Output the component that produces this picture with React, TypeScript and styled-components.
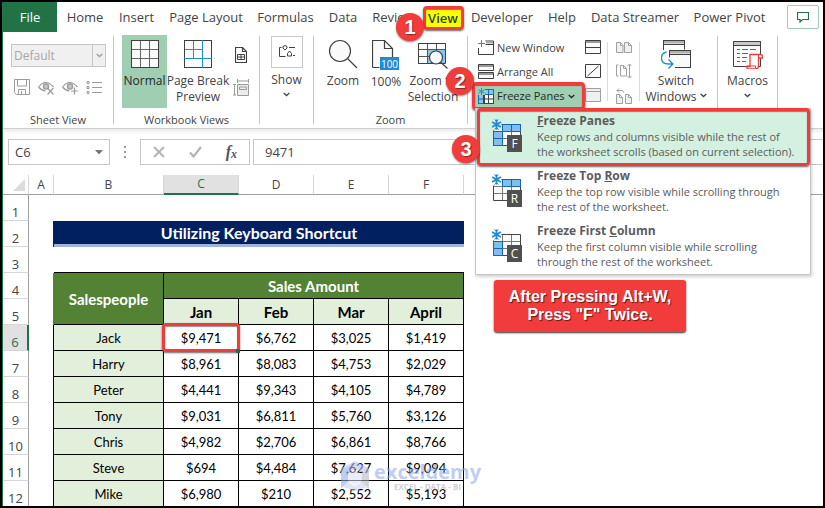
import React from "react";
import styled, { createGlobalStyle, css } from "styled-components";

const UI = '"Open Sans", "Noto Sans", sans-serif';
const SHEET = 'Lato, "Open Sans", sans-serif';
const CALLOUT = '"Liberation Sans", Arial, sans-serif';
const RED = "#f23c3c";
const GREEN = "#217346";
const INK = "#444444";

const GlobalStyle = createGlobalStyle`
  *, *::before, *::after { box-sizing: border-box; }
  body { margin: 0; background: #fff; }
  button, input, select { font: inherit; color: inherit; margin: 0; padding: 0; border: 0; background: none; border-radius: 0; }
  svg { display: block; flex: none; }
`;

const Window = styled.div`
  display: flex;
  flex-direction: column;
  height: 100vh;
  overflow: hidden;
  border: 2px solid #000;
  background: #fff;
  color: ${INK};
  font: 11px/16px ${UI};
`;

const Workspace = styled.div`
  display: flex;
  flex-direction: column;
  flex: 1;
  min-height: 0;
  border-left: 1px solid ${GREEN};
`;

/* ---------- callouts ---------- */

const Outline = styled.span<{ $inset: string }>`
  position: absolute;
  inset: ${(p) => p.$inset};
  border: 3px solid ${RED};
  border-radius: 4px;
  box-shadow: 0 1px 2px rgba(0, 0, 0, 0.6), inset 0 1px 1px rgba(0, 0, 0, 0.45);
  pointer-events: none;
`;

const Step = styled.span<{ $left: number; $top: number }>`
  position: absolute;
  left: ${(p) => p.$left}px;
  top: ${(p) => p.$top}px;
  z-index: 5;
  width: 28px;
  height: 28px;
  border-radius: 50%;
  background: ${RED};
  box-shadow: 0 1px 2px rgba(0, 0, 0, 0.5);
  color: #fff;
  font: bold 20px/28px ${CALLOUT};
  text-align: center;
  text-shadow: 1px 1px 1px rgba(0, 0, 0, 0.4);
`;

const Note = styled.p`
  position: absolute;
  left: 491px;
  top: 105px;
  width: 192px;
  margin: 0;
  padding: 8px;
  border-radius: 3px;
  background: ${RED};
  box-shadow: 0 1px 2px rgba(0, 0, 0, 0.8);
  color: #fff;
  font: bold 16px/18px ${CALLOUT};
  text-align: center;
  text-shadow: 1px 1px 1px rgba(0, 0, 0, 0.6);
`;

/* ---------- tabs ---------- */

const TabBar = styled.nav`
  position: relative;
  z-index: 4;
  display: flex;
  align-items: stretch;
  height: 30px;
  padding-right: 4px;
  font-size: 13px;
`;

const FileTab = styled.button`
  width: 54px;
  margin-right: 2px;
  background: ${GREEN};
  color: #fff;
`;

const Tab = styled.button<{ $width: number }>`
  width: ${(p) => p.$width}px;
  white-space: nowrap;
`;

const ActiveTab = styled(Tab)`
  position: relative;
  color: #1c4a2c;

  & > b {
    display: block;
    margin: 0 3px;
    padding: 2px 0 1px;
    background: #ffff00;
    font-weight: 600;
  }
`;

const CommentButton = styled.button`
  display: grid;
  place-items: center;
  width: 32px;
  height: 24px;
  margin: 3px 0 0 auto;
  border: 1px solid #9fceb3;
  border-radius: 2px;
`;

/* ---------- ribbon ---------- */

const Ribbon = styled.div`
  position: relative;
  z-index: 3;
  display: flex;
  height: 97px;
  border-bottom: 1px solid #d0d0d0;
`;

const Group = styled.section<{ $width: number }>`
  display: flex;
  flex-direction: column;
  justify-content: space-between;
  width: ${(p) => p.$width}px;
  padding: 3px 0 0;
`;

const GroupLabel = styled.h2`
  margin: 0;
  font: inherit;
  text-align: center;
`;

const Divider = styled.i<{ $short?: boolean }>`
  width: 1px;
  margin: ${(p) => (p.$short ? "7px 0" : "4px 0")};
  background: ${(p) => (p.$short ? "#dcdcdc" : "#c6c6c6")};
`;

const GroupBody = styled.div<{ $pad?: string }>`
  display: flex;
  height: 73px;
  padding: ${(p) => p.$pad ?? "0"};
`;

const SheetViewBody = styled.div`
  padding: 9px 7px 0 8px;
`;

const ViewSelect = styled.label`
  position: relative;
  display: block;
  height: 23px;

  select {
    width: 100%;
    height: 100%;
    padding-left: 2px;
    border: 1px solid #c6c6c6;
    background: #f0f0f0;
    color: #a6a6a6;
    font-size: 12px;
    appearance: none;
    opacity: 1;
  }

  span {
    position: absolute;
    top: 0;
    right: 0;
    bottom: 0;
    display: grid;
    place-items: center;
    width: 14px;
    border: 1px solid #c6c6c6;
    color: #a0a0a0;
    pointer-events: none;
  }
`;

const IconRow = styled.div`
  display: flex;
  gap: 8px;
  padding: 12px 2px 0 3px;
`;

const IconButton = styled.button`
  display: block;
`;

const BigButton = styled.button<{ $width: number; $on?: boolean; $top?: number }>`
  display: flex;
  flex-direction: column;
  align-items: center;
  width: ${(p) => p.$width}px;
  height: 73px;
  padding-top: ${(p) => p.$top ?? 4}px;
  background: ${(p) => (p.$on ? "#9fceb3" : "transparent")};
  color: ${(p) => (p.$on ? "#262626" : INK)};
  font-size: 12px;
  white-space: nowrap;

  svg:first-child { margin-bottom: 4px; }
`;

const Line = styled.span`
  display: flex;
  align-items: center;
  justify-content: center;
  gap: 3px;
  height: 16px;
`;

const SmallColumn = styled.div<{ $width: number; $gap: number; $top: number; $start?: boolean }>`
  display: flex;
  flex-direction: column;
  align-items: ${(p) => (p.$start ? "flex-start" : "center")};
  gap: ${(p) => p.$gap}px;
  width: ${(p) => p.$width}px;
  padding-top: ${(p) => p.$top}px;
  padding-left: ${(p) => (p.$start ? 2 : 0)}px;
`;

const CommandList = styled.div`
  width: 110px;
  margin-left: 5px;
  padding-top: 1px;
`;

const Command = styled.button`
  display: flex;
  align-items: center;
  gap: 3px;
  width: 100%;
  height: 24px;
  padding-left: 5px;
  white-space: nowrap;
`;

const FreezeWrap = styled.div`
  position: relative;
  color: #262626;

  & > ${Command} { background: #9fceb3; }
`;

/* ---------- freeze menu ---------- */

const Menu = styled.div`
  position: absolute;
  left: 2px;
  top: 24px;
  width: 336px;
  border: 1px solid #c6c6c6;
  background: #fff;
  box-shadow: 1px 2px 3px rgba(0, 0, 0, 0.18);
`;

const MenuItem = styled.button<{ $on?: boolean }>`
  position: relative;
  z-index: ${(p) => (p.$on ? 1 : 0)};
  display: flex;
  gap: 14px;
  width: 100%;
  height: 55px;
  padding: 3px 0 5px 15px;
  background: ${(p) => (p.$on ? "#d3f0e0" : "#fff")};
  color: #5c5c5c;
  text-align: left;
  white-space: nowrap;

  & > svg { margin-top: 7px; }
`;

const MenuText = styled.span`
  display: block;
  line-height: 15px;

  b {
    display: block;
    font-size: 12px;
    line-height: 17px;
  }
`;

/* ---------- formula bar ---------- */

const FormulaBar = styled.div`
  display: flex;
  align-items: center;
  height: 46px;
  padding-left: 5px;
  background: linear-gradient(#ececec, #fff 5px);
  font-size: 13px;
`;

const NameBox = styled.label`
  display: flex;
  align-items: center;
  width: 102px;
  height: 26px;
  padding: 0 6px;
  border: 1px solid #c6c6c6;

  input { flex: 1; min-width: 0; outline: 0; }
`;

const Grip = styled.span`
  display: flex;
  flex-direction: column;
  gap: 3px;
  width: 30px;
  padding-left: 14px;

  i { width: 2px; height: 2px; background: #9a9a9a; }
`;

const FxBox = styled.div`
  display: flex;
  align-items: center;
  justify-content: space-between;
  width: 110px;
  height: 26px;
  margin-right: 3px;
  padding: 0 12px;
  border: 1px solid #c6c6c6;
`;

const FxButton = styled.button`
  color: #555;
  font: italic bold 16px/20px "Liberation Serif", serif;

  sub { font-size: 12px; line-height: 0; vertical-align: -1px; }
`;

const FormulaInput = styled.input`
  flex: 1;
  min-width: 0;
  height: 26px;
  padding-left: 11px;
  border: 1px solid #c6c6c6;
  border-right: 0;
  outline: 0;
`;

/* ---------- sheet ---------- */

const Sheet = styled.main`
  position: relative;
  flex: 1;
  min-height: 0;
`;

const Clip = styled.div`
  height: 100%;
  overflow: hidden;
`;

const Grid = styled.table`
  width: 100%;
  table-layout: fixed;
  border-spacing: 0;
  color: #000;
  font: 13px/20px ${SHEET};
  text-align: center;

  td, th { height: 26px; padding: 0; }
`;

const ColHead = styled.th<{ $on?: boolean }>`
  && { height: 20px; }
  border-bottom: 1px solid #9f9f9f;
  border-right: 1px solid #d6d6d6;
  color: ${INK};
  font: 12px/18px ${UI};
  ${(p) =>
    p.$on &&
    css`
      border-bottom: 2px solid ${GREEN};
      background: #e1e1e1;
      color: ${GREEN};
    `}
  &:last-child { border-right: 0; }
`;

const Corner = styled(ColHead)`
  svg { margin-left: 10px; }
`;

const RowHead = styled.th<{ $on?: boolean }>`
  border-bottom: 1px solid #d6d6d6;
  border-right: 1px solid #9f9f9f;
  color: ${INK};
  font: 13px/16px ${UI};
  vertical-align: bottom;
  ${(p) =>
    p.$on &&
    css`
      border-right: 2px solid ${GREEN};
      background: #e1e1e1;
      color: ${GREEN};
    `}
`;

const Gutter = styled.td<{ $edge: string }>`
  border-right: 1px solid ${(p) => p.$edge};
`;

const Rule = styled.td`
  border-bottom: 1px solid #000;
`;

const Title = styled.td`
  border-bottom: 3px solid #a3b4dc;
  background: #002060;
  color: #fff;
  font-size: 16px;
  font-weight: bold;
`;

const Head = styled.th<{ $dark?: boolean }>`
  border-right: 1px solid #000;
  border-bottom: 1px solid #000;
  background: ${(p) => (p.$dark ? "#548235" : "#e2efda")};
  color: ${(p) => (p.$dark ? "#fff" : "#000")};
  font-size: 15px;
`;

const Cell = styled.td<{ $name?: boolean }>`
  border-right: 1px solid #000;
  border-bottom: 1px solid #000;
  background: ${(p) => (p.$name ? "#e2efda" : "#fff")};
`;

const SelectedCell = styled(Cell)`
  position: relative;
  z-index: 1;

  &::after {
    content: "";
    position: absolute;
    right: -2px;
    bottom: -3px;
    width: 4px;
    height: 4px;
    background: ${GREEN};
  }
`;

const Watermark = styled.div`
  position: absolute;
  left: 338px;
  top: 286px;
  display: flex;
  align-items: center;
  gap: 4px;
  z-index: 1;
  opacity: 0.55;
  color: #8ea6ea;
  font: bold 20px/20px ${UI};

  small {
    display: block;
    color: #a9a9ad;
    font: bold 8px/9px ${UI};
    text-align: center;
  }
`;

/* ---------- icons ---------- */

type SvgProps = { w: number; h: number; children: React.ReactNode; color?: string };
const Svg = ({ w, h, children, color = "#404040" }: SvgProps) => (
  <svg width={w} height={h} viewBox={`0 0 ${w} ${h}`} fill="none" stroke={color} aria-hidden="true">
    {children}
  </svg>
);

const Chevron = () => (
  <Svg w={7} h={5} color="currentColor">
    <path d="M.7 1l2.8 2.6L6.300 1" strokeWidth="1.3" />
  </Svg>
);

const SaveIcon = () => (
  <Svg w={16} h={16} color="#9b9b9b">
    <path d="M.5.5h15v15h-13l-2-2z M3.500.5v6.500h9v-6.500 M4.500 15.500v-5h7v5 M7.500 12v3" />
  </Svg>
);

const EyeIcon = ({ plus }: { plus?: boolean }) => (
  <Svg w={16} h={16} color="#9b9b9b">
    <path d="M.5 8q7-9 15 0M.5 8q3.500 4 7 3.800M3.500 5q4.500-2.500 9 0" strokeWidth="1.200" />
    <circle cx="8" cy="7.500" r="2.600" fill="#c4c4c4" strokeWidth="1.300" />
    <path d={plus ? "M12.500 8.500v7M9 12h7" : "M9.500 9l6 6.500M15.500 9l-6 6.500"} strokeWidth="1.200" />
  </Svg>
);

const ListIcon = () => (
  <Svg w={16} h={16} color="#9b9b9b">
    <path d="M1 2.500h2v2H1zM1 7.500h2v2H1zM1 12.500h2v2H1zM6 3.500h10M6 8.500h10M6 13.500h10" />
  </Svg>
);

const NormalIcon = () => (
  <Svg w={28} h={30}>
    <rect x=".5" y="1.500" width="27" height="27" fill="#fafafa" />
    <path d="M9.500 2v26M18.500 2v26M1 10.500h26M1 19.500h26" stroke="#666" />
    <rect x=".5" y="1.500" width="27" height="27" />
  </Svg>
);

const PageBreakIcon = () => (
  <Svg w={28} h={30}>
    <rect x=".5" y="1.500" width="27" height="27" fill="#fafafa" />
    <path d="M9.500 2v17M1 10.500h17" stroke="#777" />
    <rect x=".5" y="1.500" width="27" height="27" />
    <path d="M18.500 1v28M0 19.500h28" stroke="#1e8bd4" />
  </Svg>
);

const PageLayoutIcon = () => (
  <Svg w={12} h={16}>
    <path d="M.5.500h7l4 4v11H.500zM7.500.500v4h4" strokeWidth="1.200" />
    <path d="M2.500 7.500h7v5h-7zM6 7.500v5M2.500 10h7" />
  </Svg>
);

const CustomViewIcon = () => (
  <Svg w={16} h={17} color="#9b9b9b">
    <path d="M4.500 5.500h11v11h-11zM6.500 8h7v2.500h-7z" fill="#ececec" />
    <path d="M4 2h12M4.500 0v4M15.500 0v4M1.500 5v11M0 5.500h3M0 16h3" />
  </Svg>
);

const ShowIcon = () => (
  <Svg w={32} h={32}>
    <rect x=".5" y=".5" width="31" height="31" stroke="#c9c9c9" fill="#fff" />
    <path d="M10.500 11.500H8.500v9h6M18 11.500h6M22 19.500h2" />
    <path d="M12 10.500l2-1 2 1v1.500l-2 2-2-2zM16.500 17.500l2-2.500 2 2.500v2.500h-4z" />
  </Svg>
);

const LensIcon = () => (
  <Svg w={30} h={30}>
    <circle cx="12" cy="12" r="10.500" fill="#fafafa" strokeWidth="1.200" />
    <path d="M19.500 19.500l9.500 9.500" strokeWidth="1.200" />
  </Svg>
);

const HundredIcon = () => (
  <Svg w={28} h={31}>
    <path d="M.5 28.500v-27h12l8 8v9" fill="#fafafa" strokeWidth="1.200" />
    <path d="M12.500 1.500v8h8M.5 28.500h7" strokeWidth="1.200" />
    <rect x="8" y="18" width="19" height="13" fill="#1e8bd4" stroke="none" />
    <text x="17.500" y="28.500" fill="#fff" stroke="none" fontSize="10" textAnchor="middle" fontFamily={UI}>100</text>
  </Svg>
);

const ZoomSelectionIcon = () => (
  <Svg w={30} h={30}>
    <path d="M.5 4.500h27v20H.500z" fill="#fafafa" />
    <path d="M10 11h17v13H10z" fill="#8cc4ec" stroke="none" />
    <path d="M9.500 4v20M18.500 4v8M1 10.500h26M1 17.500h10" stroke="#555" />
    <path d="M27.500 13v-8.500H.500v20h11" />
    <circle cx="18" cy="18.500" r="6.500" fill="#f4f9fd" strokeWidth="1.200" />
    <path d="M23 23.500l6.500 6" strokeWidth="1.200" />
  </Svg>
);

const NewWindowIcon = () => (
  <Svg w={16} h={16}>
    <path d="M7.500 1h8M.5 8v6.500h15V4.500h-8M15.500 1v5" />
    <path d="M8 2.500h7" stroke="#aaa" strokeWidth="2" />
    <path d="M3.500 0v7M0 3.500h7" stroke="#2f9e5f" />
  </Svg>
);

const ArrangeIcon = () => (
  <Svg w={16} h={16}>
    <path d="M.5.500h15v6H.500zM.5 8.500h15v6H.500z" fill="#fafafa" />
    <path d="M1 2h14M1 10h14" stroke="#999" strokeWidth="2" />
  </Svg>
);

const Flake = ({ x, y, r }: { x: number; y: number; r: number }) => {
  const k = Math.round(r * 0.87 * 10) / 10;
  const h = r / 2;
  return (
    <g stroke="#1e8bd4" strokeWidth={r > 4 ? 1.8 : 1}>
      <path d={`M${x} ${y - r}V${y + r}M${x - k} ${y - h}L${x + k} ${y + h}M${x - k} ${y + h}L${x + k} ${y - h}`} />
      {r > 4 && <path d={`M${x - 2} ${y - r}l2 2 2-2M${x - 2} ${y + r}l2-2 2 2`} strokeWidth="1" />}
    </g>
  );
};

const FreezeIcon = () => (
  <Svg w={16} h={16}>
    <path d="M.5 6.500h15v9H.500zM6.500 1.500h9v14h-9z" fill="#fafafa" />
    <path d="M5.500 1.500h10v5h-10zM.500 6.500h5v9H.500z" fill="#8cc4ec" stroke="#1b6fb5" />
    <path d="M5.500 6.500v9M10.500 6.500v9M6 11h9.500M6 15.500h10v-9" />
    <path d="M10.500 2v4M1 11h4" stroke="#1b6fb5" />
    <path d="M0 0h7v7H0z" fill="#9fceb3" stroke="none" />
    <Flake x={3.500} y={3.500} r={3.500} />
  </Svg>
);

const MenuIcon = ({ letter, top, left }: { letter: string; top?: boolean; left?: boolean }) => (
  <Svg w={32} h={34}>
    <path d="M2.500 5.500h27v21h-27z" fill="#fafafa" stroke="#444" />
    <path d="M11.500 6v20M20.500 6v20M3 12.500h26M3 19.500h26" stroke="#777" />
    {top && <path d="M11.500 5.500h18v7h-18zM20.500 6v6" fill="#83bdec" stroke="#1267b4" />}
    {left && <path d="M2.500 12.500h9v14h-9zM3 19.500h8" fill="#83bdec" stroke="#1267b4" />}
    <path d="M0 0h10.500v11.500H0z" fill={top && left ? "#d3f0e0" : "#fff"} stroke="none" />
    <Flake x={5.500} y={5.500} r={5} />
    <rect x="16" y="16" width="15" height="17" fill="#505050" stroke="none" />
    <text x="23.500" y="29" fill="#fff" stroke="none" fontSize="12" textAnchor="middle" fontFamily={UI}>{letter}</text>
  </Svg>
);

const SplitIcon = () => (
  <Svg w={16} h={14}>
    <path d="M.5.500h15v13H.500z" fill="#fafafa" />
    <path d="M1 2h14" stroke="#999" strokeWidth="2" />
    <path d="M1 7.500h14" />
  </Svg>
);

const HideIcon = () => (
  <Svg w={16} h={14}>
    <path d="M.5.500h15v13H.500zM2.500 12l11-10" fill="#fafafa" />
  </Svg>
);

const UnhideIcon = () => (
  <Svg w={16} h={14} color="#a0a0a0">
    <path d="M.5.500h15v13H.500zM1 3.500h14" fill="#f0f0f0" />
  </Svg>
);

const SideBySideIcon = () => (
  <Svg w={16} h={14} color="#a0a0a0">
    <path d="M.5 2.500h4l2.500 2.500v7.500H.500zM8.500 2.500h4l3 3v7H8.500zM4.500 2.500v3h2M12.500 2.500v3h3" fill="#f0f0f0" />
  </Svg>
);

const SyncScrollIcon = () => (
  <Svg w={16} h={14} color="#a0a0a0">
    <path d="M2.500 1h-2v11h2M4.500 1.500h3l3 3v7.500h-6zM7.500 1.500v3h3" />
    <path d="M13.500 0v14M11.500 2l2-2 2 2M11.500 12l2 2 2-2" />
  </Svg>
);

const ResetIcon = () => (
  <Svg w={16} h={16} color="#a0a0a0">
    <path d="M.5 6.500h3l3 3v6h-6zM9.500 6.500h3l3 3v6h-6zM3.500 6.500v3h3M12.500 6.500v3h3" fill="#f0f0f0" />
    <path d="M1 2.500h5q1.500 0 1.500 2M3 .500l-2 2 2 2" fill="none" />
  </Svg>
);

const SwitchIcon = () => (
  <Svg w={30} h={30}>
    <path d="M2.500 11V1.500h21v9" />
    <path d="M3 3h20" stroke="#b0b0b0" strokeWidth="3" />
    <path d="M2 1.500h22M3 5.500h20" />
    <path d="M8.500 11.500h21v17H14M8.500 11.500v7" fill="#fafafa" />
    <path d="M9 13h20" stroke="#b0b0b0" strokeWidth="3" />
    <path d="M8 11.500h22M9 15.500h20M29.500 11v18" />
    <path d="M5.500 13q-5 1-5 6 0 6 7 6h4M7.500 20.500l4.500 4.500-4.500 4.500" stroke="#1e8bd4" strokeWidth="1.300" />
  </Svg>
);

const MacrosIcon = () => (
  <Svg w={30} h={30}>
    <path d="M.5 2.500h27v25H.500z" fill="#fafafa" />
    <path d="M1 4.500h26" stroke="#c8c8c8" strokeWidth="3" />
    <path d="M1 6.500h26M.5 2.500h27" />
    <path d="M4 10.500h3M9 10.500h6M17 10.500h6M4 14.500h3M9 14.500h6M4 18.500h3M9 18.500h5M4 22.500h3M9 22.500h4" stroke="#666" />
    <path d="M17 15.500h10.500q2 0 2 2v1.500h-4v8q0 3-2.500 3h-9v-2.500h3z" fill="#fff" stroke="#ee3b3b" strokeWidth="1.300" />
    <path d="M25.500 19v-3M14 27h8.500v3" stroke="#ee3b3b" />
  </Svg>
);

const CommentIcon = () => (
  <Svg w={12} h={12} color={GREEN}>
    <path d="M.5 1.500h11v7h-6l-2.500 2.500v-2.500h-2.500z" strokeWidth="1.200" />
  </Svg>
);

const BrandIcon = () => (
  <svg width="29" height="30" viewBox="0 0 29 30" aria-hidden="true">
    <path d="M14 0l14 7.500v8L14 8 0 15V7.500z" fill="#aebdf0" />
    <path d="M0 9l9-4v15L0 27z" fill="#8ea6ea" />
    <path d="M28 9l-9 4v8l9 7z" fill="#b4b4ba" />
    <path d="M14 9l7 4v7l-7 4-7-4v-7z" fill="#d9dff4" />
    <path d="M7 21l7 4 7-4 5 5-12 4-12-4z" fill="#c6cff0" />
  </svg>
);

/* ---------- data ---------- */

const TABS_BEFORE: [string, number][] = [
  ["Home", 52], ["Insert", 51], ["Page Layout", 88], ["Formulas", 71], ["Data", 44], ["Review", 57],
];
const TABS_AFTER: [string, number][] = [
  ["Developer", 76], ["Help", 44], ["Data Streamer", 102], ["Power Pivot", 87],
];
const COLUMNS = ["A", "B", "C", "D", "E", "F"];
const MONTHS = ["Jan", "Feb", "Mar", "April"];
const SALES: [string, ...string[]][] = [
  ["Jack", "$9,471", "$6,762", "$3,025", "$1,419"],
  ["Harry", "$8,961", "$8,083", "$4,753", "$2,029"],
  ["Peter", "$4,441", "$9,343", "$4,105", "$4,789"],
  ["Tony", "$9,031", "$6,811", "$5,760", "$3,126"],
  ["Chris", "$4,982", "$2,706", "$6,861", "$8,766"],
  ["Steve", "$694", "$4,484", "$7,627", "$9,094"],
  ["Mike", "$6,980", "$210", "$2,552", "$5,193"],
];

const FreezeMenu = () => (
  <Menu role="menu">
    <MenuItem role="menuitem" $on>
      <MenuIcon letter="F" top left />
      <MenuText>
        <b><u>F</u>reeze Panes</b>
        Keep rows and columns visible while the rest of<br />
        the worksheet scrolls (based on current selection).
      </MenuText>
      <Outline $inset="-1px 0 -2px 1px" />
    </MenuItem>
    <MenuItem role="menuitem">
      <MenuIcon letter="R" top />
      <MenuText>
        <b>Freeze Top <u>R</u>ow</b>
        Keep the top row visible while scrolling through<br />
        the rest of the worksheet.
      </MenuText>
    </MenuItem>
    <MenuItem role="menuitem">
      <MenuIcon letter="C" left />
      <MenuText>
        <b>Freeze First <u>C</u>olumn</b>
        Keep the first column visible while scrolling<br />
        through the rest of the worksheet.
      </MenuText>
    </MenuItem>
    <Step $left={-24} $top={26}>3</Step>
  </Menu>
);

export default function App() {
  return (
    <Window>
      <GlobalStyle />
      <Workspace>
        <TabBar>
          <FileTab>File</FileTab>
          {TABS_BEFORE.map(([t, w]) => <Tab key={t} $width={w}>{t}</Tab>)}
          <ActiveTab $width={42}>
            <b>View</b>
            <Outline $inset="4px 0 2px 1px" />
            <Step $left={-26} $top={11}>1</Step>
          </ActiveTab>
          {TABS_AFTER.map(([t, w]) => <Tab key={t} $width={w}>{t}</Tab>)}
          <CommentButton aria-label="Comments"><CommentIcon /></CommentButton>
        </TabBar>

        <Ribbon>
          <Group $width={110}>
            <SheetViewBody>
              <ViewSelect>
                <select disabled aria-label="Sheet view"><option>Default</option></select>
                <span><Chevron /></span>
              </ViewSelect>
              <IconRow>
                <IconButton aria-label="Keep"><SaveIcon /></IconButton>
                <IconButton aria-label="Exit"><EyeIcon /></IconButton>
                <IconButton aria-label="New"><EyeIcon plus /></IconButton>
                <IconButton aria-label="Options"><ListIcon /></IconButton>
              </IconRow>
            </SheetViewBody>
            <GroupLabel>Sheet View</GroupLabel>
          </Group>
          <Divider />

          <Group $width={145}>
            <GroupBody $pad="0 0 0 8px">
              <BigButton $width={45} $on><NormalIcon /><Line>Normal</Line></BigButton>
              <BigButton $width={62}><PageBreakIcon /><Line>Page Break</Line><Line>Preview</Line></BigButton>
              <SmallColumn $width={24} $gap={16} $top={12}>
                <IconButton aria-label="Page Layout"><PageLayoutIcon /></IconButton>
                <IconButton aria-label="Custom Views"><CustomViewIcon /></IconButton>
              </SmallColumn>
            </GroupBody>
            <GroupLabel>Workbook Views</GroupLabel>
          </Group>
          <Divider />

          <Group $width={53}>
            <GroupBody>
              <BigButton $width={53} $top={1}><ShowIcon /><Line>Show</Line><Line><Chevron /></Line></BigButton>
            </GroupBody>
          </Group>
          <Divider />

          <Group $width={153}>
            <GroupBody $pad="0 0 0 4px">
              <BigButton $width={50}><LensIcon /><Line>Zoom</Line></BigButton>
              <BigButton $width={36}><HundredIcon /><Line>100%</Line></BigButton>
              <BigButton $width={58}><ZoomSelectionIcon /><Line>Zoom to</Line><Line>Selection</Line></BigButton>
            </GroupBody>
            <GroupLabel>Zoom</GroupLabel>
          </Group>
          <Divider />

          <Group $width={249}>
            <GroupBody>
              <CommandList>
                <Command><NewWindowIcon />New Window</Command>
                <Command><ArrangeIcon />Arrange All</Command>
                <FreezeWrap>
                  <Command aria-haspopup="menu" aria-expanded="true"><FreezeIcon />Freeze Panes<Chevron /></Command>
                  <Outline $inset="-2px -2px -2px -1px" />
                  <FreezeMenu />
                  <Step $left={-27} $top={-17}>2</Step>
                </FreezeWrap>
              </CommandList>
              <SmallColumn $width={24} $gap={10} $top={5} $start>
                <IconButton aria-label="Split"><SplitIcon /></IconButton>
                <IconButton aria-label="Hide"><HideIcon /></IconButton>
                <IconButton aria-label="Unhide"><UnhideIcon /></IconButton>
              </SmallColumn>
              <Divider $short />
              <SmallColumn $width={31} $gap={10} $top={5}>
                <IconButton aria-label="View Side by Side"><SideBySideIcon /></IconButton>
                <IconButton aria-label="Synchronous Scrolling"><SyncScrollIcon /></IconButton>
                <IconButton aria-label="Reset Window Position"><ResetIcon /></IconButton>
              </SmallColumn>
              <Divider $short />
              <BigButton $width={72}>
                <SwitchIcon /><Line>Switch</Line><Line>Windows<Chevron /></Line>
              </BigButton>
            </GroupBody>
          </Group>
          <Divider />

          <Group $width={59}>
            <GroupBody>
              <BigButton $width={59}><MacrosIcon /><Line>Macros</Line><Line><Chevron /></Line></BigButton>
            </GroupBody>
          </Group>
          <Divider />
        </Ribbon>

        <FormulaBar>
          <NameBox>
            <input aria-label="Name box" defaultValue="C6" />
            <Svg w={8} h={5}><path d="M0 0h8L4 4.500z" fill="#777" stroke="none" /></Svg>
          </NameBox>
          <Grip><i /><i /><i /></Grip>
          <FxBox>
            <IconButton aria-label="Cancel">
              <Svg w={12} h={12} color="#b4b4b4"><path d="M1 1l10 10M11 1L1 11" strokeWidth="2" /></Svg>
            </IconButton>
            <IconButton aria-label="Enter">
              <Svg w={13} h={12} color="#b4b4b4"><path d="M1 6.500l3.500 4L12 1" strokeWidth="2.200" /></Svg>
            </IconButton>
            <FxButton aria-label="Insert function">f<sub>x</sub></FxButton>
          </FxBox>
          <FormulaInput aria-label="Formula" defaultValue="9471" />
        </FormulaBar>

        <Sheet>
          <Clip>
            <Grid>
              <colgroup>
                <col width="26" /><col width="25" /><col width="110" />
                <col width="75" /><col width="75" /><col width="75" /><col width="75" /><col />
              </colgroup>
              <thead>
                <tr>
                  <Corner aria-label="Select all">
                    <Svg w={12} h={12}><path d="M12 0v12H0z" fill="#dcdcdc" stroke="none" /></Svg>
                  </Corner>
                  {COLUMNS.map((c) => <ColHead key={c} $on={c === "C"}>{c}</ColHead>)}
                  <ColHead />
                </tr>
              </thead>
              <tbody>
                <tr><RowHead>1</RowHead><td colSpan={7} /></tr>
                <tr>
                  <RowHead>2</RowHead>
                  <Gutter $edge="#002060" />
                  <Title colSpan={5}>Utilizing Keyboard Shortcut</Title>
                  <td />
                </tr>
                <tr><RowHead>3</RowHead><td /><Rule colSpan={5} /><td /></tr>
                <tr>
                  <RowHead>4</RowHead>
                  <Gutter $edge="#548235" />
                  <Head rowSpan={2} $dark>Salespeople</Head>
                  <Head colSpan={4} $dark>Sales Amount</Head>
                  <td />
                </tr>
                <tr>
                  <RowHead>5</RowHead>
                  <Gutter $edge="#548235" />
                  {MONTHS.map((m) => <Head key={m}>{m}</Head>)}
                  <td />
                </tr>
                {SALES.map(([name, ...values], r) => (
                  <tr key={name}>
                    <RowHead $on={r === 0}>{r + 6}</RowHead>
                    <Gutter $edge="#000" />
                    <Cell $name>{name}</Cell>
                    {values.map((v, c) =>
                      r === 0 && c === 0 ? (
                        <SelectedCell key={c}>{v}<Outline $inset="-2px" /></SelectedCell>
                      ) : (
                        <Cell key={c}>{v}</Cell>
                      )
                    )}
                    <td />
                  </tr>
                ))}
              </tbody>
            </Grid>
          </Clip>
          <Watermark>
            <BrandIcon />
            <span>exceldemy<small>EXCEL - DATA - BI</small></span>
          </Watermark>
          <Note>After Pressing Alt+W,<br />Press "F" Twice.</Note>
        </Sheet>
      </Workspace>
    </Window>
  );
}
